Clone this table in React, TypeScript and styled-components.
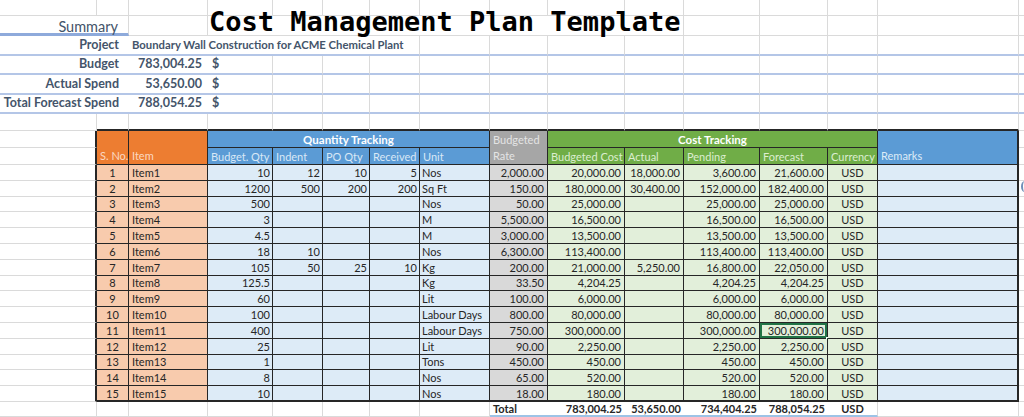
import React from 'react';
import styled, { createGlobalStyle } from 'styled-components';

const GRID = '#dadada';
const INK = '#262626';
const SLATE = '#44546a';

// column widths of the worksheet, A..P
const COLS = [97, 32, 79, 65, 50, 47, 50, 70, 58, 77, 59, 76, 68, 50, 141, 5];

type Edge = 'grid' | 'ink' | 'thick' | 'none' | 'band' | 'heading' | 'total';

const EDGE: Record<Edge, string> = {
  grid: `1px solid ${GRID}`,
  ink: `1px solid ${INK}`,
  thick: `2px solid ${INK}`,
  none: '0 none',
  band: '2px solid #b4c6e7',
  heading: '3px solid #8eaadb',
  total: '2px solid #9dc3e6',
};

const GlobalStyle = createGlobalStyle`
  html, body {
    margin: 0;
    padding: 0;
    background: #fff;
    overflow: hidden;
  }
  body {
    font-family: Lato, 'Open Sans', sans-serif;
    font-size: 11px;
    color: #262626;
  }
  *, *:before, *:after {
    box-sizing: border-box;
  }
`;

const Sheet = styled.div`
  display: grid;
  width: 1024px;
  height: 417px;
  overflow: hidden;
  grid-template-columns: ${COLS.map((w) => `${w}px`).join(' ')};
  grid-template-rows: 16px 20px 20px 19px 20px 19px 17px 17px 17px repeat(15, 15.8px) 15px;
`;

const Cell = styled.div<{ $r?: Edge; $b?: Edge }>`
  position: relative;
  display: flex;
  align-items: center;
  min-width: 0;
  padding: 0 3px;
  white-space: nowrap;
  line-height: 1;
  border-right: ${(p) => EDGE[p.$r ?? 'grid']};
  border-bottom: ${(p) => EDGE[p.$b ?? 'grid']};
`;

/* ---------- summary block ---------- */

const SummaryLabel = styled(Cell)`
  grid-column: span 2;
  justify-content: flex-end;
  padding-right: 10px;
  color: ${SLATE};
  font-weight: 700;
  font-size: 12.5px;
`;

const SummaryHeading = styled(SummaryLabel)`
  font-weight: 400;
  font-size: 14.5px;
  padding-top: 6px;
`;

const TitleCell = styled(Cell)`
  grid-column: span 8;
  align-items: flex-end;
  padding-left: 1px;
  font-family: 'DejaVu Sans Mono', 'Liberation Mono', monospace;
  font-weight: 700;
  font-size: 27px;
  line-height: 26px;
  color: #000;
  z-index: 1;
`;

const ProjectValue = styled(Cell)`
  grid-column: span 5;
  color: ${SLATE};
  font-weight: 700;
  font-size: 11.3px;
`;

const Amount = styled(Cell)`
  justify-content: flex-end;
  padding-right: 6px;
  color: ${SLATE};
  font-weight: 700;
  font-size: 12.5px;
`;

const Dollar = styled(Cell)`
  padding-left: 4px;
  color: ${SLATE};
  font-weight: 700;
  font-size: 12.5px;
`;

/* ---------- table header ---------- */

const GroupHead = styled(Cell)<{ $fill: string }>`
  grid-column: span 5;
  justify-content: center;
  background: ${(p) => p.$fill};
  color: #fff;
  font-weight: 700;
  font-size: 11.5px;
  padding-top: 1px;
`;

const TallHead = styled(Cell)<{ $fill: string; $ink: string }>`
  grid-row: span 2;
  align-items: flex-end;
  padding-bottom: 3px;
  background: ${(p) => p.$fill};
  color: ${(p) => p.$ink};
`;

const RateHead = styled(Cell)`
  grid-row: span 2;
  flex-direction: column;
  align-items: flex-start;
  justify-content: space-around;
  background: #a6a6a6;
  color: #e4e4e4;
`;

const SubHead = styled(Cell)<{ $fill: string; $ink: string }>`
  padding-top: 1px;
  background: ${(p) => p.$fill};
  color: ${(p) => p.$ink};
`;

/* ---------- table body ---------- */

const IndexCell = styled(Cell)`
  justify-content: center;
  background: #f8cbad;
`;

const ItemCell = styled(Cell)`
  background: #f8cbad;
`;

const QtyCell = styled(Cell)`
  justify-content: flex-end;
  padding-right: 2px;
  background: #ddebf7;
`;

const UnitCell = styled(Cell)`
  padding-left: 2px;
  background: #ddebf7;
`;

const RateCell = styled(Cell)`
  justify-content: flex-end;
  background: #d9d9d9;
`;

const CostCell = styled(Cell)<{ $selected?: boolean }>`
  justify-content: flex-end;
  background: #e2efda;
  box-shadow: ${(p) => (p.$selected ? 'inset 0 0 0 2px #217346' : 'none')};

  &::after {
    content: '';
    display: ${(p) => (p.$selected ? 'block' : 'none')};
    position: absolute;
    right: -4px;
    bottom: -4px;
    width: 5px;
    height: 5px;
    background: #217346;
    border: 1px solid #fff;
  }
`;

const CurrencyCell = styled(Cell)`
  justify-content: center;
  background: #e2efda;
`;

const RemarkCell = styled(Cell)`
  background: #ddebf7;
`;

const ScrollNub = styled.span`
  position: absolute;
  left: 2px;
  top: 0;
  width: 8px;
  height: 11px;
  border-left: 2px solid #6f8fb8;
  border-radius: 50%;
`;

/* ---------- total row ---------- */

const TotalLabel = styled(Cell)`
  font-weight: 700;
  background: #fff;
`;

const TotalValue = styled(Cell)<{ $center?: boolean }>`
  justify-content: ${(p) => (p.$center ? 'center' : 'flex-end')};
  font-weight: 700;
  background: #fff;
`;

type Row = {
  qty: string[];
  unit: string;
  rate: string;
  cost: string[];
};

const ROWS: Row[] = [
  { qty: ['10', '12', '10', '5'], unit: 'Nos', rate: '2,000.00', cost: ['20,000.00', '18,000.00', '3,600.00', '21,600.00'] },
  { qty: ['1200', '500', '200', '200'], unit: 'Sq Ft', rate: '150.00', cost: ['180,000.00', '30,400.00', '152,000.00', '182,400.00'] },
  { qty: ['500', '', '', ''], unit: 'Nos', rate: '50.00', cost: ['25,000.00', '', '25,000.00', '25,000.00'] },
  { qty: ['3', '', '', ''], unit: 'M', rate: '5,500.00', cost: ['16,500.00', '', '16,500.00', '16,500.00'] },
  { qty: ['4.5', '', '', ''], unit: 'M', rate: '3,000.00', cost: ['13,500.00', '', '13,500.00', '13,500.00'] },
  { qty: ['18', '10', '', ''], unit: 'Nos', rate: '6,300.00', cost: ['113,400.00', '', '113,400.00', '113,400.00'] },
  { qty: ['105', '50', '25', '10'], unit: 'Kg', rate: '200.00', cost: ['21,000.00', '5,250.00', '16,800.00', '22,050.00'] },
  { qty: ['125.5', '', '', ''], unit: 'Kg', rate: '33.50', cost: ['4,204.25', '', '4,204.25', '4,204.25'] },
  { qty: ['60', '', '', ''], unit: 'Lit', rate: '100.00', cost: ['6,000.00', '', '6,000.00', '6,000.00'] },
  { qty: ['100', '', '', ''], unit: 'Labour Days', rate: '800.00', cost: ['80,000.00', '', '80,000.00', '80,000.00'] },
  { qty: ['400', '', '', ''], unit: 'Labour Days', rate: '750.00', cost: ['300,000.00', '', '300,000.00', '300,000.00'] },
  { qty: ['25', '', '', ''], unit: 'Lit', rate: '90.00', cost: ['2,250.00', '', '2,250.00', '2,250.00'] },
  { qty: ['1', '', '', ''], unit: 'Tons', rate: '450.00', cost: ['450.00', '', '450.00', '450.00'] },
  { qty: ['8', '', '', ''], unit: 'Nos', rate: '65.00', cost: ['520.00', '', '520.00', '520.00'] },
  { qty: ['10', '', '', ''], unit: 'Nos', rate: '18.00', cost: ['180.00', '', '180.00', '180.00'] },
];

const SUMMARY = [
  { label: 'Budget', value: '783,004.25' },
  { label: 'Actual Spend', value: '53,650.00' },
  { label: 'Total Forecast Spend', value: '788,054.25' },
];

const blanks = (n: number, key: string, b: Edge = 'grid') =>
  Array.from({ length: n }, (_, i) => <Cell key={`${key}${i}`} $b={b} />);

export default function App() {
  return (
    <>
      <GlobalStyle />
      <Sheet>
        {/* row 1 */}
        {blanks(16, 'r1-')}

        {/* row 2: heading + title */}
        <SummaryHeading $b="heading">Summary</SummaryHeading>
        <Cell />
        <TitleCell>Cost Management Plan Template</TitleCell>
        {blanks(5, 'r2-')}

        {/* row 3: project */}
        <SummaryLabel $r="none" $b="band">Project</SummaryLabel>
        <ProjectValue $b="band">Boundary Wall Construction for ACME Chemical Plant</ProjectValue>
        {blanks(9, 'r3-', 'band')}

        {/* rows 4-6: amounts */}
        {SUMMARY.map((s) => (
          <React.Fragment key={s.label}>
            <SummaryLabel $r="none" $b="band">{s.label}</SummaryLabel>
            <Amount $r="none" $b="band">{s.value}</Amount>
            <Dollar $b="band">$</Dollar>
            {blanks(12, `${s.label}-`, 'band')}
          </React.Fragment>
        ))}

        {/* row 7: spacer above the table */}
        <Cell />
        {blanks(14, 'r7-', 'thick')}
        <Cell />

        {/* row 8: group headers */}
        <Cell $r="thick" />
        <TallHead $fill="#ed7d31" $ink="#fbd9c2" $r="ink" $b="ink">S. No.</TallHead>
        <TallHead $fill="#ed7d31" $ink="#fbd9c2" $r="ink" $b="ink">Item</TallHead>
        <GroupHead $fill="#5b9bd5" $r="ink" $b="ink">Quantity Tracking</GroupHead>
        <RateHead $r="ink" $b="ink">
          <span>Budgeted</span>
          <span>Rate</span>
        </RateHead>
        <GroupHead $fill="#70ad47" $r="ink" $b="ink">Cost Tracking</GroupHead>
        <TallHead $fill="#5b9bd5" $ink="#ddebf7" $r="thick" $b="ink">Remarks</TallHead>
        <Cell />

        {/* row 9: column headers */}
        <Cell $r="thick" />
        {['Budget. Qty', 'Indent', 'PO Qty', 'Received', 'Unit'].map((h) => (
          <SubHead key={h} $fill="#5b9bd5" $ink="#d9e8f6" $r="ink" $b="ink">{h}</SubHead>
        ))}
        {['Budgeted Cost', 'Actual', 'Pending', 'Forecast', 'Currency'].map((h) => (
          <SubHead key={h} $fill="#70ad47" $ink="#dcedd0" $r="ink" $b="ink">{h}</SubHead>
        ))}
        <Cell />

        {/* data rows */}
        {ROWS.map((row, i) => {
          const b: Edge = i === ROWS.length - 1 ? 'thick' : 'ink';
          return (
            <React.Fragment key={i}>
              <Cell $r="thick" />
              <IndexCell $r="ink" $b={b}>{i + 1}</IndexCell>
              <ItemCell $r="ink" $b={b}>Item{i + 1}</ItemCell>
              {row.qty.map((q, j) => (
                <QtyCell key={j} $r="ink" $b={b}>{q}</QtyCell>
              ))}
              <UnitCell $r="ink" $b={b}>{row.unit}</UnitCell>
              <RateCell $r="ink" $b={b}>{row.rate}</RateCell>
              {row.cost.map((c, j) => (
                <CostCell key={j} $r="ink" $b={b} $selected={i === 10 && j === 3}>{c}</CostCell>
              ))}
              <CurrencyCell $r="ink" $b={b}>USD</CurrencyCell>
              <RemarkCell $r="thick" $b={b} />
              <Cell>{i === 1 && <ScrollNub />}</Cell>
            </React.Fragment>
          );
        })}

        {/* total row */}
        {blanks(8, 'tot-')}
        <TotalLabel $r="none" $b="total">Total</TotalLabel>
        {['783,004.25', '53,650.00', '734,404.25', '788,054.25'].map((t) => (
          <TotalValue key={t} $r="none" $b="total">{t}</TotalValue>
        ))}
        <TotalValue $center $b="total">USD</TotalValue>
        <Cell />
        <Cell />
      </Sheet>
    </>
  );
}
